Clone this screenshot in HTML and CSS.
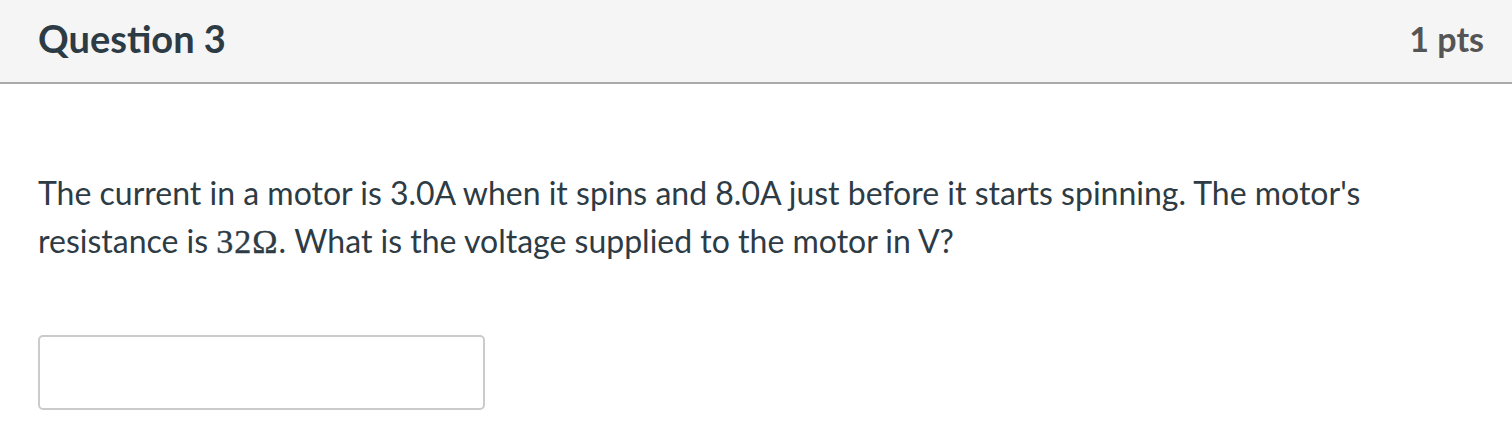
FILE: index.html
```html
<!DOCTYPE html>
<html>
<head>
<meta charset="utf-8">
<link rel="stylesheet" href="styles.css">
</head>
<body>
<div class="question">
  <div class="header">
    <span class="title">Question 3</span>
    <span class="points">1 pts</span>
  </div>
  <div class="content">
    <p class="text">The current in a motor is 3.0A when it spins and 8.0A just before it starts spinning. The motor's resistance is <span class="math">32Ω</span>. What is the voltage supplied to the motor in V?</p>
    <div class="answer"><input class="field" type="text"></div>
  </div>
</div>
</body>
</html>
```
FILE: styles.css
```css
html, body {
  margin: 0;
  padding: 0;
  background: #fff;
}
body {
  font-family: Lato, "Helvetica Neue", Arial, sans-serif;
  color: #2d3b45;
}
.header {
  display: flex;
  justify-content: space-between;
  align-items: center;
  box-sizing: border-box;
  height: 84px;
  padding: 0 28px 6px 38px;
  background: #f5f5f5;
  border-bottom: 2px solid #aaaaaa;
}
.title {
  font-size: 38px;
  font-weight: 700;
  color: #2d3b45;
}
.points {
  font-size: 34px;
  font-weight: 700;
  color: #555;
}
.content {
  padding: 0 38px;
}
.text {
  margin: 0;
  padding-top: 85px;
  font-size: 32px;
  line-height: 48px;
  max-width: 1360px;
}
.math {
  font-family: "Liberation Serif", "Times New Roman", serif;
  font-size: 34px;
  line-height: 1;
  letter-spacing: 1px;
  -webkit-text-stroke: 0.4px #2d3b45;
}
.answer {
  padding-top: 70px;
}
.field {
  display: block;
  box-sizing: border-box;
  width: 447px;
  height: 75px;
  margin: 0;
  border: 2px solid #cbcbcb;
  border-radius: 5px;
  background: #fff;
}
```
